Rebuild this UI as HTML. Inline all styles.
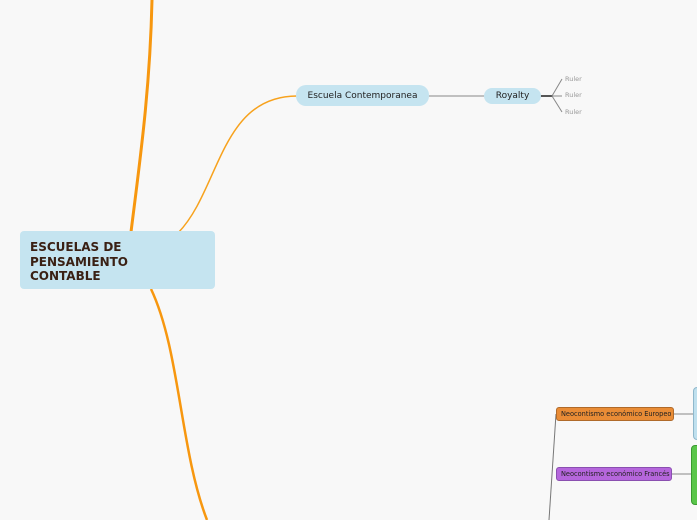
<!DOCTYPE html>
<html><head><meta charset="utf-8"><style>
body{margin:0;width:697px;height:520px;background:#f8f8f8;position:relative;overflow:hidden;font-family:"DejaVu Sans","Liberation Sans",sans-serif}
.n{position:absolute;box-sizing:border-box}
</style></head><body>
<svg width="697" height="520" style="position:absolute;left:0;top:0">
<path d="M152 0 C150 90 140 160 131 232" stroke="#f7970f" stroke-width="3" fill="none"/>
<path d="M178 233 C220 190 220 96 297 96" stroke="#f7a21d" stroke-width="1.5" fill="none"/>
<path d="M151 289 C180 350 180 450 207 520" stroke="#f7970f" stroke-width="2.5" fill="none"/>
<path d="M428 96 L485 96" stroke="#888" stroke-width="1"/>
<path d="M540 96 L552 96" stroke="#555" stroke-width="2"/>
<path d="M552 96 L562 79 M552 96 L562 96 M552 96 L562 112" stroke="#888" stroke-width="1" fill="none"/>
<path d="M556 414 L549 520" stroke="#777" stroke-width="1"/>
<path d="M673 414 L695 414 M671 474 L692 474" stroke="#888" stroke-width="1"/>
</svg>
<div class="n" style="left:20px;top:231px;width:195px;height:58px;background:#c5e4f0;border-radius:4px;padding:9px 10px;font-weight:bold;font-size:12px;line-height:14.5px;color:#3a2014">ESCUELAS DE<br>PENSAMIENTO<br>CONTABLE</div>
<div class="n" style="left:296px;top:85px;width:133px;height:21px;background:#c5e4f0;border-radius:10px;font-size:9px;line-height:22px;text-align:center;color:#222">Escuela Contemporanea</div>
<div class="n" style="left:484px;top:88px;width:57px;height:16px;background:#c5e4f0;border-radius:8px;font-size:9px;line-height:17px;text-align:center;color:#222">Royalty</div>
<div class="n" style="left:565px;top:75px;font-size:6.5px;color:#999">Ruler</div>
<div class="n" style="left:565px;top:91px;font-size:6.5px;color:#999">Ruler</div>
<div class="n" style="left:565px;top:108px;font-size:6.5px;color:#999">Ruler</div>
<div class="n" style="left:556px;top:407px;width:118px;height:14px;background:#e98c36;border:1px solid #b06a2a;border-radius:3px;font-size:6.6px;line-height:12px;padding-left:4px;color:#222">Neocontismo económico Europeo</div>
<div class="n" style="left:556px;top:467px;width:116px;height:14px;background:#b566dc;border:1px solid #8a4fb0;border-radius:3px;font-size:6.6px;line-height:12px;padding-left:4px;color:#222">Neocontismo económico Francés</div>
<div class="n" style="left:693px;top:387px;width:10px;height:53px;background:#bfe0ee;border:1px solid #8fb8cc;border-radius:4px"></div>
<div class="n" style="left:691px;top:445px;width:12px;height:60px;background:#5ac64a;border:1px solid #3a9a30;border-radius:4px"></div>
</body></html>
